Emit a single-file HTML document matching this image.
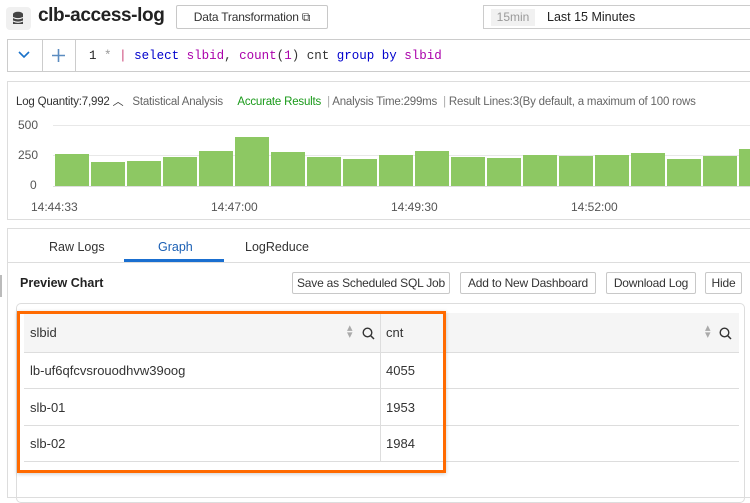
<!DOCTYPE html>
<html><head><style>
body{margin:0;width:750px;height:490px;overflow:hidden;background:#fff;font-family:"Liberation Sans",sans-serif;color:#333;position:relative}
.a{position:absolute;white-space:nowrap}
.btn{position:absolute;border:1px solid #c8c8c8;background:#fff;font-size:12px;height:22px;line-height:21px;text-align:center;box-sizing:border-box;color:#333;border-radius:2px;white-space:nowrap;overflow:hidden;letter-spacing:-0.2px}
.mono{font-family:"Liberation Mono",monospace;font-size:12.5px}
.bar{position:absolute;background:#8dc863;width:34px;bottom:0}
.row{position:absolute;left:24px;width:715px;border-bottom:1px solid #ddd;font-size:13px}
</style></head><body>
<div class="a" style="left:6px;top:7px;width:25px;height:23px;background:#f0f0f0;border-radius:4px"></div>
<svg class="a" style="left:12px;top:11px" width="12" height="15" viewBox="0 0 12 15"><ellipse cx="6" cy="3" rx="5" ry="2.2" fill="#444"/><rect x="1" y="3" width="10" height="10" fill="#444"/><path d="M1 6.5q5 2.5 10 0M1 10q5 2.5 10 0" stroke="#f0f0f0" fill="none" stroke-width="1.2"/></svg>
<div class="a" style="left:38px;top:5px;font-size:19px;font-weight:bold;color:#222;letter-spacing:-0.4px">clb-access-log</div>
<div class="btn" style="left:176px;top:5px;width:152px;height:24px;line-height:23px">Data Transformation ⧉</div>
<div class="a" style="left:483px;top:5px;width:270px;height:24px;border:1px solid #ccc;box-sizing:border-box"></div>
<div class="a" style="left:491px;top:9px;width:44px;height:17px;background:#f1f1f1;color:#999;font-size:12px;line-height:17px;text-align:center">15min</div>
<div class="a" style="left:547px;top:10px;font-size:12.5px;color:#222">Last 15 Minutes</div>

<div class="a" style="left:7px;top:39px;width:750px;height:33px;border:1px solid #ccc;box-sizing:border-box"></div>
<div class="a" style="left:42px;top:39px;width:1px;height:33px;background:#ccc"></div>
<div class="a" style="left:75px;top:39px;width:1px;height:33px;background:#ccc"></div>
<svg class="a" style="left:18px;top:51px" width="12" height="8"><path d="M1 1l5 5 5-5" stroke="#1a72c9" stroke-width="1.6" fill="none"/></svg>
<svg class="a" style="left:52px;top:49px" width="13" height="13"><path d="M6.5 0v13M0 6.5h13" stroke="#5b8cc0" stroke-width="1.6"/></svg>
<div class="a mono" style="left:89px;top:49px;white-space:pre"><span style="color:#222">1</span> <span style="color:#999">*</span> <span style="color:#c47">|</span> <span style="color:#00c">select</span> <span style="color:#a0a">slbid</span>, <span style="color:#a0a">count</span>(<span style="color:#a0a">1</span>) cnt <span style="color:#00c">group by</span> <span style="color:#a0a">slbid</span></div>

<div class="a" style="left:7px;top:81px;width:750px;height:139px;border:1px solid #ddd;box-sizing:border-box"></div>
<div class="a" style="left:16px;top:93px;font-size:11.5px;color:#333;letter-spacing:-0.2px">Log Quantity:7,992 <span style="font-size:11px">︿</span>&nbsp;&nbsp; <span style="color:#666">Statistical Analysis</span>&nbsp;&nbsp;&nbsp;&nbsp; <span style="color:#1a9a1a">Accurate Results</span>&nbsp; <span style="color:#aaa">|</span> <span style="color:#666">Analysis Time:299ms</span>&nbsp; <span style="color:#aaa">|</span> <span style="color:#666">Result Lines:3(By default, a maximum of 100 rows</span></div>
<div class="a" style="left:18px;top:118px;font-size:12px;color:#555">500</div>
<div class="a" style="left:18px;top:148px;font-size:12px;color:#555">250</div>
<div class="a" style="left:30px;top:178px;font-size:12px;color:#555">0</div>
<div class="a" style="left:53px;top:125px;width:700px;height:1px;background:#e8e8e8"></div>
<div class="a" style="left:53px;top:155px;width:700px;height:1px;background:#e8e8e8"></div>
<div class="a" style="left:53px;top:186px;width:700px;height:1px;background:#ddd"></div>
<div class="a" style="left:0;top:0;width:750px;height:186px">
<div class="bar" style="left:55px;height:32px"></div><div class="bar" style="left:91px;height:24px"></div><div class="bar" style="left:127px;height:25px"></div><div class="bar" style="left:163px;height:29px"></div><div class="bar" style="left:199px;height:35px"></div><div class="bar" style="left:235px;height:49px"></div><div class="bar" style="left:271px;height:34px"></div><div class="bar" style="left:307px;height:29px"></div><div class="bar" style="left:343px;height:27px"></div><div class="bar" style="left:379px;height:31px"></div><div class="bar" style="left:415px;height:35px"></div><div class="bar" style="left:451px;height:29px"></div><div class="bar" style="left:487px;height:28px"></div><div class="bar" style="left:523px;height:31px"></div><div class="bar" style="left:559px;height:30px"></div><div class="bar" style="left:595px;height:31px"></div><div class="bar" style="left:631px;height:33px"></div><div class="bar" style="left:667px;height:27px"></div><div class="bar" style="left:703px;height:30px"></div><div class="bar" style="left:739px;height:37px"></div>
</div>
<div class="a" style="left:31px;top:200px;font-size:12px;color:#555">14:44:33</div>
<div class="a" style="left:211px;top:200px;font-size:12px;color:#555">14:47:00</div>
<div class="a" style="left:391px;top:200px;font-size:12px;color:#555">14:49:30</div>
<div class="a" style="left:571px;top:200px;font-size:12px;color:#555">14:52:00</div>

<div class="a" style="left:7px;top:228px;width:750px;height:270px;border:1px solid #ddd;box-sizing:border-box"></div>
<div class="a" style="left:0;top:275px;width:2px;height:22px;background:#bbb"></div>
<div class="a" style="left:8px;top:262px;width:742px;height:1px;background:#ddd"></div>
<div class="a" style="left:49px;top:240px;font-size:12.5px">Raw Logs</div>
<div class="a" style="left:158px;top:240px;font-size:12.5px;color:#1a5fb4">Graph</div>
<div class="a" style="left:245px;top:240px;font-size:12.5px">LogReduce</div>
<div class="a" style="left:124px;top:259px;width:100px;height:3px;background:#1a6fd0"></div>
<div class="a" style="left:20px;top:276px;font-size:12.5px;font-weight:bold;color:#222">Preview Chart</div>
<div class="btn" style="left:292px;top:272px;width:158px">Save as Scheduled SQL Job</div>
<div class="btn" style="left:460px;top:272px;width:136px">Add to New Dashboard</div>
<div class="btn" style="left:606px;top:272px;width:90px">Download Log</div>
<div class="btn" style="left:705px;top:272px;width:37px">Hide</div>

<div class="a" style="left:16px;top:303px;width:729px;height:200px;border:1px solid #ddd;border-radius:5px;box-sizing:border-box"></div>
<div class="a" style="left:24px;top:313px;width:715px;height:39px;background:#f5f5f5;border-bottom:1px solid #ddd"></div>
<div class="a" style="left:380px;top:313px;width:1px;height:148px;background:#ddd"></div>
<div class="a" style="left:30px;top:325px;font-size:13px">slbid</div>
<div class="a" style="left:386px;top:325px;font-size:13px">cnt</div>
<div class="a" style="left:347px;top:325px;font-size:11px;color:#aaa;line-height:7px">▴<br>▾</div>
<div class="a" style="left:705px;top:325px;font-size:11px;color:#aaa;line-height:7px">▴<br>▾</div>
<svg class="a" style="left:362px;top:327px" width="13" height="13"><circle cx="5.5" cy="5.5" r="4.3" stroke="#333" stroke-width="1.4" fill="none"/><path d="M8.5 8.5l3.5 3.5" stroke="#333" stroke-width="1.5"/></svg>
<svg class="a" style="left:719px;top:327px" width="13" height="13"><circle cx="5.5" cy="5.5" r="4.3" stroke="#333" stroke-width="1.4" fill="none"/><path d="M8.5 8.5l3.5 3.5" stroke="#333" stroke-width="1.5"/></svg>
<div class="row" style="top:353px;height:35px"></div>
<div class="row" style="top:389px;height:36px"></div>
<div class="row" style="top:426px;height:35px"></div>
<div class="a" style="left:30px;top:363px;font-size:13px">lb-uf6qfcvsrouodhvw39oog</div>
<div class="a" style="left:386px;top:363px;font-size:13px">4055</div>
<div class="a" style="left:30px;top:400px;font-size:13px">slb-01</div>
<div class="a" style="left:386px;top:400px;font-size:13px">1953</div>
<div class="a" style="left:30px;top:436px;font-size:13px">slb-02</div>
<div class="a" style="left:386px;top:436px;font-size:13px">1984</div>
<div class="a" style="left:17px;top:311px;width:429px;height:162px;border:3px solid #ff6a00;box-sizing:border-box;box-shadow:0 1px 4px rgba(0,0,0,.2)"></div>
</body></html>
